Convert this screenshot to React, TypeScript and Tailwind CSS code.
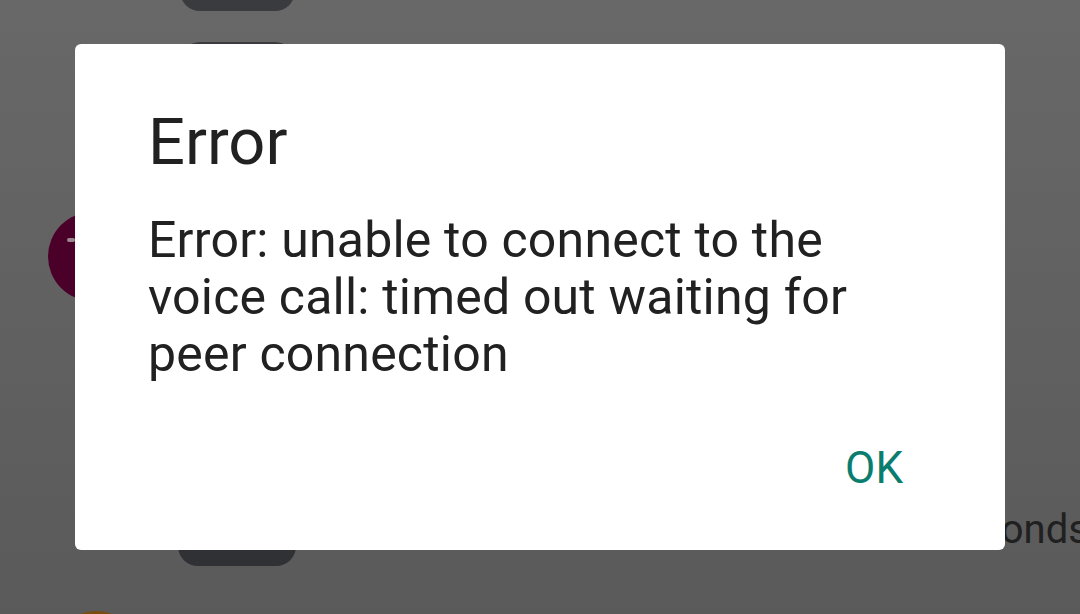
import React from 'react';

const font = { fontFamily: 'Roboto, "Noto Sans", sans-serif' };

const App: React.FC = () => {
  return (
    <div
      className="relative w-[1080px] h-[614px] overflow-hidden bg-gradient-to-b from-[#686868] to-[#5a5a5a]"
      style={font}
    >
      {/* dimmed screen behind the dialog */}
      <div className="absolute left-[180px] top-[-30px] w-[115px] h-[41px] rounded-[20px] bg-[#3a3b3f]" />
      <div className="absolute left-[180px] top-[42px] w-[115px] h-[41px] rounded-[20px] bg-[#3a3b3f]" />
      <div className="absolute left-[48px] top-[212px] w-[89px] h-[89px] rounded-full bg-[#4a0029]">
        <div className="absolute left-[19px] top-[26px] w-[8px] h-[4px] rounded-sm bg-[#9a8890]" />
      </div>
      <div className="absolute left-[178px] top-[526px] w-[118px] h-[40px] rounded-[20px] bg-[#303134]" />
      <span className="absolute left-[938px] top-[506px] text-[40px] leading-[48px] text-[#202020] whitespace-nowrap">
        seconds
      </span>
      <div className="absolute left-[52px] top-[611px] w-[89px] h-[89px] rounded-full bg-[#7a4c10]" />

      {/* dialog */}
      <div className="absolute left-[75px] top-[44px] w-[930px] h-[506px] rounded-[6px] bg-white flex flex-col pt-[66px] pl-[73px] pr-[102px]">
        <h1 className="text-[65px] leading-[65px] text-[#212121]">Error</h1>
        <p className="mt-[37px] text-[50px] leading-[57px] tracking-[0.2px] text-[#212121] whitespace-nowrap">
          <span className="block">Error: unable to connect to the</span>
          <span className="block">voice call: timed out waiting for</span>
          <span className="block">peer connection</span>
        </p>
        <div className="mt-[63px] flex justify-end">
          <button className="text-[44px] leading-[44px] text-[#0a7d6e]">OK</button>
        </div>
      </div>
    </div>
  );
};

export default App;
